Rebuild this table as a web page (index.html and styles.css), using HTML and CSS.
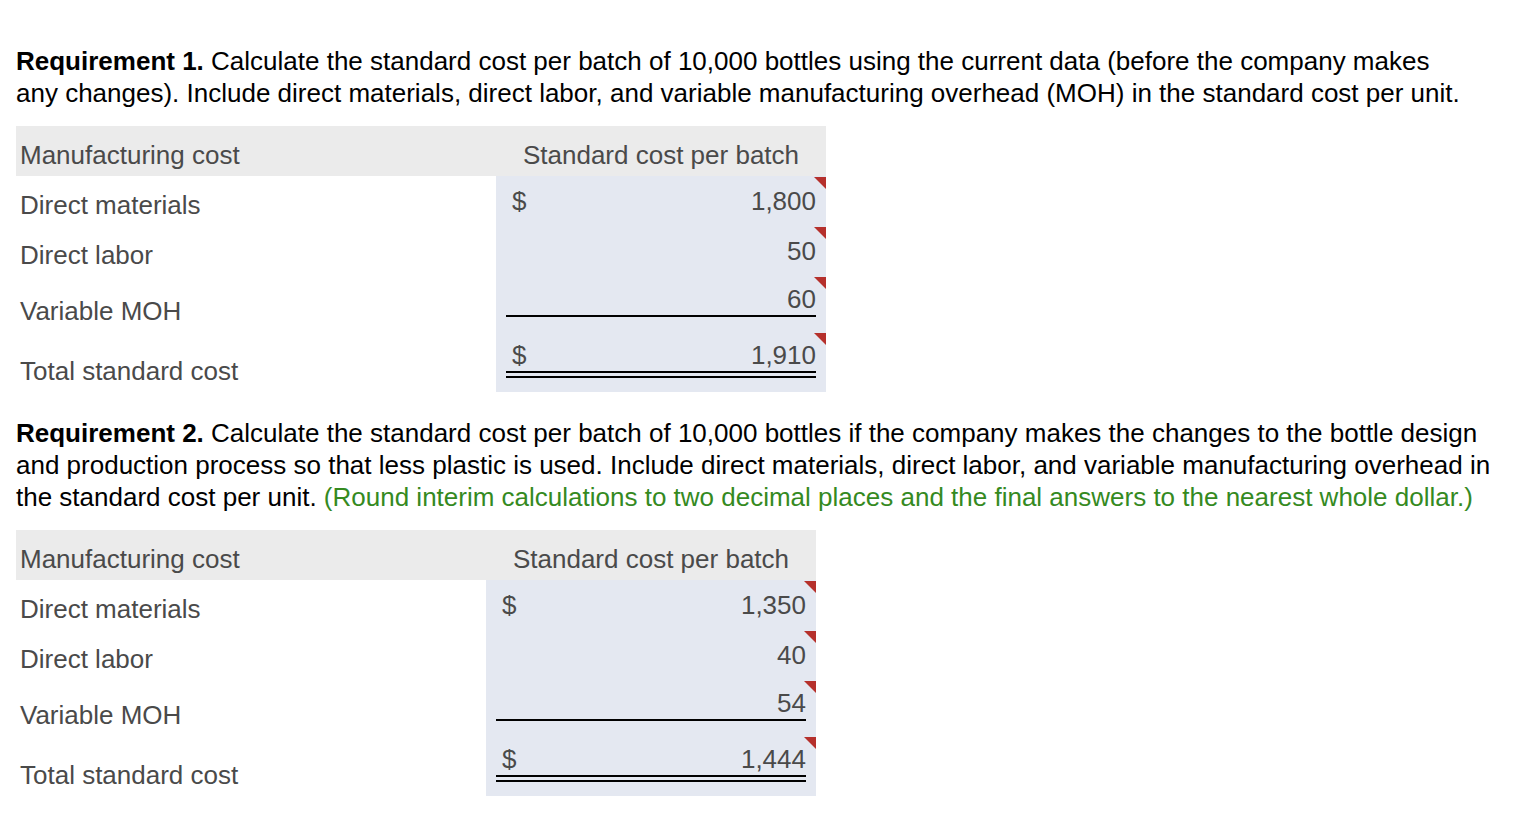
FILE: index.html
```html
<!DOCTYPE html>
<html>
<head>
<meta charset="utf-8">
<link rel="stylesheet" href="styles.css">
</head>
<body>
<div class="page">
  <p class="req req-first"><b>Requirement 1.</b> Calculate the standard cost per batch of 10,000 bottles using the current data (before the company makes any changes). Include direct materials, direct labor, and variable manufacturing overhead (MOH) in the standard cost per unit.</p>

  <div class="cost-table t1">
    <div class="hdr lbl">Manufacturing cost</div>
    <div class="hdr val-h">Standard cost per batch</div>

    <div class="lbl r1">Direct materials</div>
    <div class="val r1"><div class="inp"><span>$</span><span>1,800</span></div><i class="flag"></i></div>

    <div class="lbl r2">Direct labor</div>
    <div class="val r2"><div class="inp"><span></span><span>50</span></div><i class="flag"></i></div>

    <div class="lbl r3">Variable MOH</div>
    <div class="val r3"><div class="inp single"><span></span><span>60</span></div><i class="flag"></i></div>

    <div class="lbl r4">Total standard cost</div>
    <div class="val r4"><div class="inp dbl"><span>$</span><span>1,910</span></div><i class="flag"></i></div>
  </div>

  <p class="req req-second"><b>Requirement 2.</b> Calculate the standard cost per batch of 10,000 bottles if the company makes the changes to the bottle design and production process so that less plastic is used. Include direct materials, direct labor, and variable manufacturing overhead in the standard cost per unit. <span class="hint">(Round interim calculations to two decimal places and the final answers to the nearest whole dollar.)</span></p>

  <div class="cost-table t2">
    <div class="hdr lbl">Manufacturing cost</div>
    <div class="hdr val-h">Standard cost per batch</div>

    <div class="lbl r1">Direct materials</div>
    <div class="val r1"><div class="inp"><span>$</span><span>1,350</span></div><i class="flag"></i></div>

    <div class="lbl r2">Direct labor</div>
    <div class="val r2"><div class="inp"><span></span><span>40</span></div><i class="flag"></i></div>

    <div class="lbl r3">Variable MOH</div>
    <div class="val r3"><div class="inp single"><span></span><span>54</span></div><i class="flag"></i></div>

    <div class="lbl r4">Total standard cost</div>
    <div class="val r4"><div class="inp dbl"><span>$</span><span>1,444</span></div><i class="flag"></i></div>
  </div>
</div>
</body>
</html>
```

FILE: styles.css
```css
html, body {
  margin: 0;
  padding: 0;
  background: #ffffff;
}

body {
  font-family: "Liberation Sans", Arial, Helvetica, sans-serif;
  font-size: 26px;
  line-height: 32px;
  color: #000;
}

.page {
  padding: 45px 0 0 16px;
  width: 1480px;
}

.req {
  margin: 0 0 17px 0;
}

.req-first {
  max-width: 1450px;
}

.req-second {
  margin-top: 25px;
}

.hint {
  color: #358a1f;
}

.cost-table {
  display: grid;
  color: #4a4a4a;
}

.t1 {
  grid-template-columns: 480px 330px;
  width: 810px;
}

.t2 {
  grid-template-columns: 470px 330px;
  width: 800px;
}

.hdr {
  background: #ebebeb;
  height: 50px;
  box-sizing: border-box;
  padding-top: 13px;
}

.lbl {
  padding-left: 4px;
  box-sizing: border-box;
}

.val-h {
  text-align: center;
}

.val {
  position: relative;
  background: #e4e8f1;
  padding: 0 10px;
  box-sizing: border-box;
}

.inp {
  display: flex;
  justify-content: space-between;
  padding-left: 6px;
}

.inp.single {
  border-bottom: 2px solid #000;
}

.inp.dbl {
  border-bottom: 7px double #000;
}

.flag {
  position: absolute;
  top: 1px;
  right: 0;
  width: 0;
  height: 0;
  border-style: solid;
  border-width: 0 12px 12px 0;
  border-color: transparent #b5302c transparent transparent;
}

.r1, .r2 { height: 50px; }
.r3 { height: 56px; }
.r4 { height: 60px; }

.lbl.r1, .lbl.r2 { padding-top: 13px; }
.lbl.r3 { padding-top: 19px; }
.lbl.r4 { padding-top: 23px; }

.val.r1, .val.r2 { padding-top: 9px; }
.val.r3 { padding-top: 7px; }
.val.r4 { padding-top: 7px; }
```
